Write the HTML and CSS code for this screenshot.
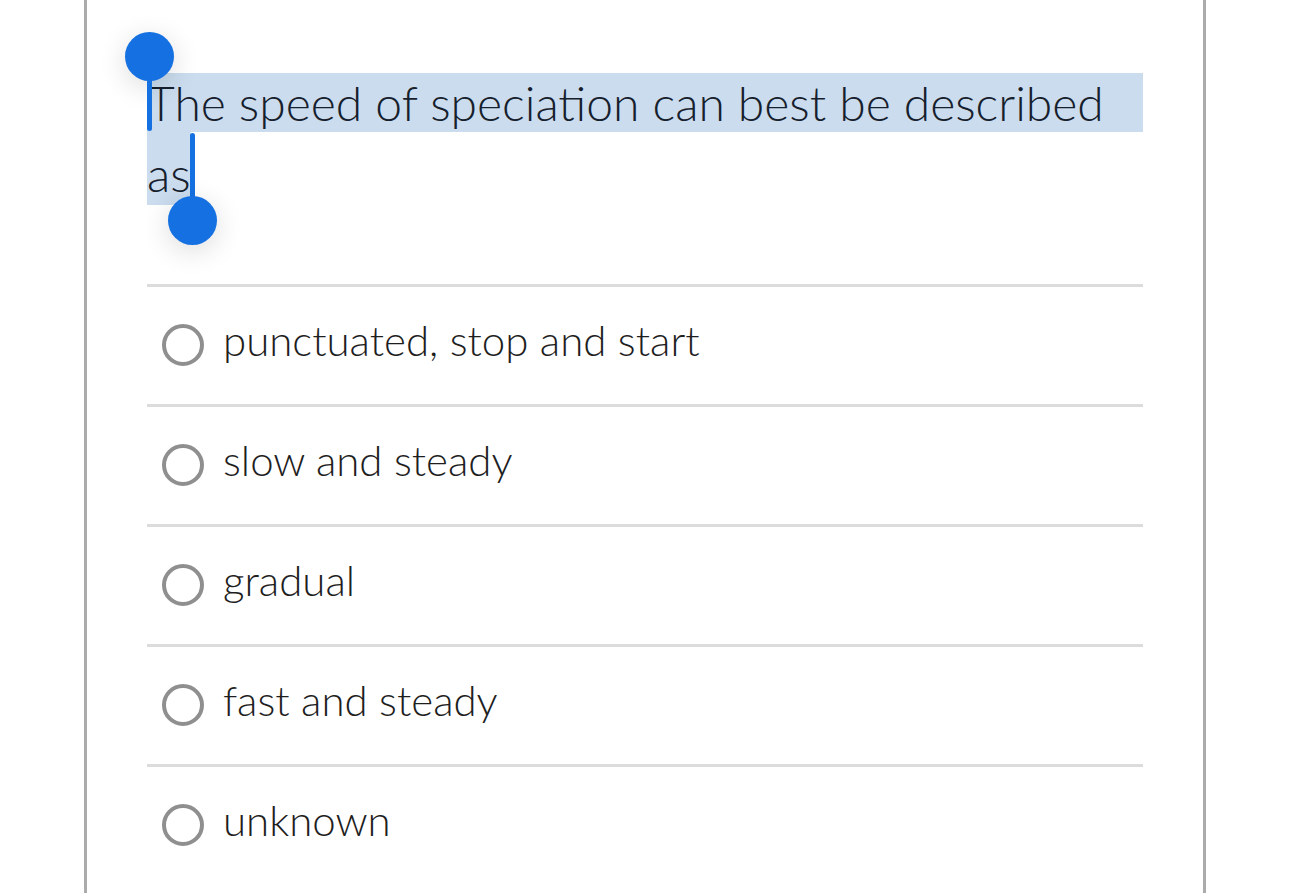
FILE: index.html
```html
<!DOCTYPE html>
<html lang="en">
<head>
  <meta charset="UTF-8" />
  <meta name="viewport" content="width=device-width, initial-scale=1" />
  <title>Question</title>
  <link rel="stylesheet" href="styles.css">
</head>
<body>
  <div class="page">
    <div class="question">
      <p class="question-text">
        <span class="sel-line">The speed of speciation can best be described</span>
        <span class="sel-line sel-last">as</span>
      </p>
      <div class="handle handle-start">
        <span class="handle-dot"></span>
        <span class="handle-bar"></span>
      </div>
      <div class="handle handle-end">
        <span class="handle-bar"></span>
        <span class="handle-dot"></span>
      </div>
    </div>

    <ul class="answers">
      <li class="answer"><span class="radio"></span><span class="answer-label">punctuated, stop and start</span></li>
      <li class="answer"><span class="radio"></span><span class="answer-label">slow and steady</span></li>
      <li class="answer"><span class="radio"></span><span class="answer-label">gradual</span></li>
      <li class="answer"><span class="radio"></span><span class="answer-label">fast and steady</span></li>
      <li class="answer"><span class="radio"></span><span class="answer-label">unknown</span></li>
    </ul>
  </div>
</body>
</html>
```

FILE: styles.css
```css
html, body {
  margin: 0;
  height: 100%;
  background: #fff;
  overflow: hidden;
}
body {
  font-family: "Lato Light", Lato, "Open Sans", Arial, sans-serif;
  font-weight: 300;
  color: #111;
}
.page {
  box-sizing: border-box;
  margin-left: 84px;
  width: 1122px;
  height: 893px;
  border-left: 3px solid #ababab;
  border-right: 3px solid #ababab;
  padding: 0 60px;
}
.question {
  position: relative;
  box-sizing: border-box;
  height: 284px;
  padding-top: 73px;
}
.question-text {
  margin: 0;
  font-size: 48px;
  color: #16202c;
}
.sel-line {
  display: block;
  background: #cadcee;
  height: 59px;
  line-height: 59px;
  white-space: nowrap;
}
.sel-last {
  display: inline-block;
  box-sizing: border-box;
  height: 73px;
  padding-top: 10px;
  line-height: 63px;
  vertical-align: top;
  margin-right: 3px;
}
.handle {
  position: absolute;
  display: flex;
  flex-direction: column;
  align-items: center;
  width: 50px;
}
.handle-dot {
  width: 49px;
  height: 49px;
  border-radius: 50%;
  background: #1571e2;
  box-shadow: 0 6px 28px rgba(0, 0, 0, 0.14);
}
.handle-bar {
  width: 5px;
  border-radius: 3px;
  background: #1571e2;
}
.handle-start {
  left: -23px;
  top: 32px;
}
.handle-start .handle-bar {
  height: 52px;
  margin-top: -2px;
}
.handle-end {
  left: 20px;
  top: 133px;
}
.handle-end .handle-bar {
  height: 66px;
  margin-bottom: -3px;
}
.answers {
  list-style: none;
  margin: 0;
  padding: 0;
}
.answer {
  display: flex;
  align-items: center;
  gap: 19px;
  height: 120px;
  box-sizing: border-box;
  border-top: 3px solid #dcdcdc;
  padding: 0 0 2px 15px;
  font-size: 42px;
  color: #1e1e1e;
}
.answer-label {
  padding-bottom: 9px;
}
.radio {
  width: 42px;
  height: 42px;
  box-sizing: border-box;
  border: 4px solid #8f8f8f;
  border-radius: 50%;
  flex: none;
}
```
